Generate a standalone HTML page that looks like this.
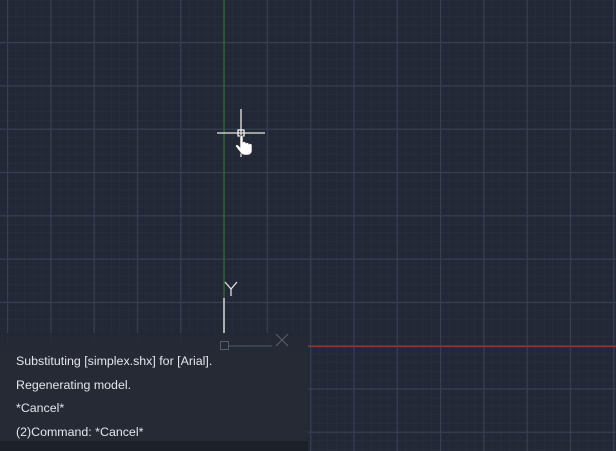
<!DOCTYPE html>
<html><head><style>
html,body{margin:0;padding:0;background:#222835;width:616px;height:451px;overflow:hidden;position:relative}
svg{position:absolute;left:0;top:0}
.panel{position:absolute;left:0;top:333px;width:308px;height:118px;background:linear-gradient(#232834cc,#252a35 20px);}
.strip{position:absolute;left:0;top:441px;width:308px;height:10px;background:#1c2029}
.t{position:absolute;left:16px;font:12.4px "Liberation Sans",sans-serif;color:#e4e6ea;white-space:nowrap}
</style></head><body>
<svg width="616" height="451">
<defs>
<pattern id="minor" x="7" y="42" width="8.66" height="8.66" patternUnits="userSpaceOnUse">
<path d="M0 0V8.66M0 0H8.66" stroke="#2a3040" stroke-width="1" fill="none"/>
</pattern>
<pattern id="major" x="7" y="42" width="43.3" height="43.3" patternUnits="userSpaceOnUse">
<path d="M0.5 0V43.3M0 0.5H43.3" stroke="#363e52" stroke-width="1.4" fill="none"/>
</pattern>
</defs>
<rect width="616" height="451" fill="#222835"/>
<rect width="616" height="451" fill="url(#minor)"/>
<rect width="616" height="451" fill="url(#major)"/>
<line x1="224" y1="0" x2="224" y2="298" stroke="#2f6a33" stroke-width="1.3"/>
<line x1="308" y1="346.5" x2="616" y2="346.5" stroke="#8a3a36" stroke-width="1.3"/>
<line x1="217" y1="133" x2="265" y2="133" stroke="#e8e8e8" stroke-width="1.3"/>
<line x1="241" y1="109" x2="241" y2="157" stroke="#e8e8e8" stroke-width="1.3"/>
<rect x="238" y="130" width="6" height="6" fill="none" stroke="#fff" stroke-width="1.2"/>
<path d="M240 137v10l-2-2c-2-1-3 1-2 2l4 5c1 2 3 3 5 3h3c2 0 4-2 4-4v-6c0-1-2-2-3-1c0-1-2-2-3-1c0-1-2-2-3-1v-5c0-2-3-2-3 0z" fill="#fff" stroke="#333" stroke-width="0.6"/>
<line x1="224" y1="298" x2="224" y2="333" stroke="#d8d8d8" stroke-width="1.5"/>
<path d="M225 282l6 7l6-7M231 289v7" stroke="#e0e0e0" stroke-width="1.3" fill="none"/>
</svg>
<div class="panel"></div>
<div class="strip"></div>
<svg width="616" height="451">
<rect x="220.5" y="341.5" width="8" height="8" fill="none" stroke="#555c6a" stroke-width="1"/>
<line x1="229" y1="346" x2="272" y2="346" stroke="#555c6a" stroke-width="1"/>
<path d="M276 334l12 12M288 334l-12 12" stroke="#555c6a" stroke-width="1.2"/>
</svg>
<div class="t" style="top:354px">Substituting [simplex.shx] for [Arial].</div>
<div class="t" style="top:378px">Regenerating model.</div>
<div class="t" style="top:401px">*Cancel*</div>
<div class="t" style="top:425px">(2)Command: *Cancel*</div>
</body></html>
